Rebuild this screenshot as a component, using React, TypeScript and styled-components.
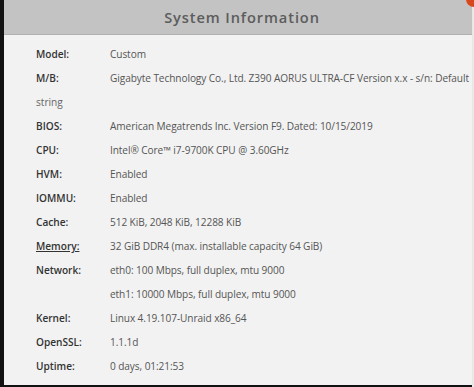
import React from 'react'
import styled, { createGlobalStyle } from 'styled-components'

const GlobalStyle = createGlobalStyle`
  html, body {
    margin: 0;
    padding: 0;
    background: #121212;
    font-family: 'Open Sans', 'DejaVu Sans', sans-serif;
  }
`

const Screen = styled.div`
  position: relative;
  width: 474px;
  height: 387px;
  overflow: hidden;
  display: flex;
  background: #121212;
`

const Backdrop = styled.div`
  width: 4px;
  flex: none;
`

const Dialog = styled.div`
  width: 468px;
  height: 385px;
  display: flex;
  flex-direction: column;
  background: #f2f2f2;
`

const Header = styled.div`
  height: 34px;
  flex: none;
  display: flex;
  align-items: center;
  justify-content: center;
  padding-left: 8px;
  background: #c3c3c3;
  border-bottom: 1px solid #b0b0b0;
  color: #5c5c5c;
  font-size: 14.6px;
  font-weight: 600;
  letter-spacing: 0.9px;
`

const Table = styled.div`
  display: grid;
  grid-template-columns: 74px 1fr;
  grid-auto-rows: 24px;
  padding: 7px 0 0 32px;
  font-size: 10.1px;
`

const Label = styled.div<{ plain?: boolean; link?: boolean }>`
  display: flex;
  align-items: center;
  color: ${p => (p.plain ? '#666' : '#333')};
  font-weight: ${p => (p.plain ? 400 : 600)};
  text-decoration: ${p => (p.link ? 'underline' : 'none')};
  white-space: nowrap;
`

const Value = styled.div`
  display: flex;
  align-items: center;
  color: #555;
  letter-spacing: -0.08px;
  white-space: nowrap;
`

const CloseDot = styled.div`
  position: absolute;
  top: -9px;
  right: -8px;
  width: 16px;
  height: 16px;
  border-radius: 50%;
  background: #d8461c;
`

const RightEdge = styled.div`
  width: 2px;
  flex: none;
  background: #e8e8e8;
`

type Row = { label: string; value: string; plain?: boolean; link?: boolean }

const rows: Row[] = [
  { label: 'Model:', value: 'Custom' },
  {
    label: 'M/B:',
    value: 'Gigabyte Technology Co., Ltd. Z390 AORUS ULTRA-CF Version x.x - s/n: Default',
  },
  { label: 'string', value: '', plain: true },
  { label: 'BIOS:', value: 'American Megatrends Inc. Version F9. Dated: 10/15/2019' },
  { label: 'CPU:', value: 'Intel® Core™ i7-9700K CPU @ 3.60GHz' },
  { label: 'HVM:', value: 'Enabled' },
  { label: 'IOMMU:', value: 'Enabled' },
  { label: 'Cache:', value: '512 KiB, 2048 KiB, 12288 KiB' },
  { label: 'Memory:', value: '32 GiB DDR4 (max. installable capacity 64 GiB)', link: true },
  { label: 'Network:', value: 'eth0: 100 Mbps, full duplex, mtu 9000' },
  { label: '', value: 'eth1: 10000 Mbps, full duplex, mtu 9000' },
  { label: 'Kernel:', value: 'Linux 4.19.107-Unraid x86_64' },
  { label: 'OpenSSL:', value: '1.1.1d' },
  { label: 'Uptime:', value: '0 days, 01:21:53' },
]

export default function App() {
  return (
    <>
      <GlobalStyle />
      <Screen>
        <Backdrop />
        <Dialog>
          <Header>System Information</Header>
          <Table>
            {rows.map((r, i) => (
              <React.Fragment key={i}>
                <Label plain={r.plain} link={r.link}>
                  {r.label}
                </Label>
                <Value>{r.value}</Value>
              </React.Fragment>
            ))}
          </Table>
        </Dialog>
        <RightEdge />
        <CloseDot />
      </Screen>
    </>
  )
}
